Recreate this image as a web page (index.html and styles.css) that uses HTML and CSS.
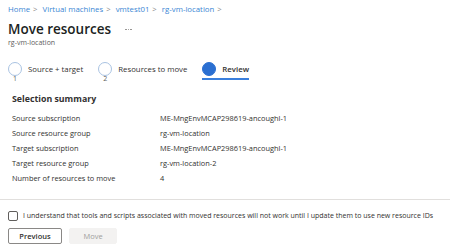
FILE: index.html
```html
<!DOCTYPE html>
<html lang="en">
<head>
    <meta charset="utf-8"/>
    <title>Move resources</title>
    <link rel="stylesheet" href="styles.css">
</head>
<body>
    <nav class="crumbs">
        <a>Home</a><span class="sep">&gt;</span>
        <a>Virtual machines</a><span class="sep">&gt;</span>
        <a>vmtest01</a><span class="sep">&gt;</span>
        <a>rg-vm-location</a><span class="sep">&gt;</span>
    </nav>
    <div class="head">
        <h1>Move resources</h1>
        <span class="more"><i></i><i></i><i></i></span>
    </div>
    <p class="sub">rg-vm-location</p>

    <div class="steps">
        <div class="step">
            <span class="dot"></span><span class="num">1</span>
            <span class="label">Source + target</span>
        </div>
        <div class="step">
            <span class="dot"></span><span class="num">2</span>
            <span class="label">Resources to move</span>
        </div>
        <div class="step active">
            <span class="dot"></span>
            <span class="label">Review</span>
        </div>
    </div>

    <section class="summary">
        <h2>Selection summary</h2>
        <div class="row"><span class="key">Source subscription</span><span>ME-MngEnvMCAP298619-ancoughl-1</span></div>
        <div class="row"><span class="key">Source resource group</span><span>rg-vm-location</span></div>
        <div class="row"><span class="key">Target subscription</span><span>ME-MngEnvMCAP298619-ancoughl-1</span></div>
        <div class="row"><span class="key">Target resource group</span><span>rg-vm-location-2</span></div>
        <div class="row"><span class="key">Number of resources to move</span><span>4</span></div>
    </section>

    <footer class="foot">
        <label class="check"><span class="box"></span>I understand that tools and scripts associated with moved resources will not work until I update them to use new resource IDs</label>
        <div class="buttons">
            <button class="btn">Previous</button>
            <button class="btn off">Move</button>
        </div>
    </footer>
</body>
</html>
```
FILE: styles.css
```css
* {
    box-sizing: border-box;
    font-family: "Open Sans", "Noto Sans", sans-serif;
}
body {
    margin: 0;
    width: 450px;
    color: #323130;
    background: #fff;
}
.crumbs {
    padding: 3px 8px 0;
    font-size: 7.8px;
    line-height: 13px;
    color: #3a86d4;
}
.crumbs .sep {
    color: #8a8886;
    margin: 0 3px;
}
.head {
    display: flex;
    align-items: center;
    padding: 4px 8px 0;
}
h1 {
    margin: 0;
    font-size: 13.5px;
    font-weight: 600;
    line-height: 18px;
    color: #201f1e;
}
.more {
    display: flex;
    gap: 1px;
    margin-left: 14px;
    margin-top: 1px;
}
.more i {
    width: 1.5px;
    height: 1.5px;
    border-radius: 50%;
    background: #8a8886;
}
.sub {
    margin: 0 8px;
    font-size: 7px;
    line-height: 10px;
    color: #605e5c;
}
.steps {
    display: flex;
    padding: 14px 8px 0;
    height: 34px;
}
.step {
    position: relative;
    display: flex;
    align-items: flex-start;
    margin-right: 15px;
}
.dot {
    width: 14px;
    height: 14px;
    border-radius: 50%;
    border: 1px solid #a9c3e2;
    background: #fff;
}
.num {
    position: absolute;
    left: 5px;
    top: 12px;
    font-size: 7px;
    line-height: 10px;
    color: #605e5c;
}
.label {
    margin-left: 6px;
    font-size: 7.8px;
    line-height: 15px;
}
.step.active .dot {
    background: #2b6fd1;
    border-color: #2b6fd1;
}
.step.active .label {
    font-weight: 600;
}
.step.active {
    border-bottom: 2px solid #3a7fdc;
    height: 18px;
}
.summary {
    padding: 11px 12px 0;
}
h2 {
    margin: 0 0 6px;
    font-size: 8.8px;
    font-weight: 700;
    line-height: 12px;
}
.row {
    display: flex;
    font-size: 7.4px;
    line-height: 15px;
}
.row .key {
    width: 148px;
}
.foot {
    margin-top: 13px;
    border-top: 1px solid #e1dfdd;
    padding: 10px 8px 0;
}
.check {
    display: flex;
    align-items: center;
    font-size: 7px;
    line-height: 12px;
    white-space: nowrap;
}
.box {
    width: 10px;
    height: 10px;
    border: 1px solid #605e5c;
    border-radius: 2px;
    margin-right: 5px;
}
.buttons {
    display: flex;
    gap: 7px;
    margin-top: 6px;
}
.btn {
    width: 54px;
    height: 16px;
    padding: 0;
    border: 1px solid #8a8886;
    border-radius: 2px;
    background: #fff;
    font-size: 7.5px;
    font-weight: 600;
    color: #323130;
}
.btn.off {
    width: 48px;
    border-color: #f3f2f1;
    background: #f3f2f1;
    color: #a19f9d;
    font-weight: 400;
}
```
